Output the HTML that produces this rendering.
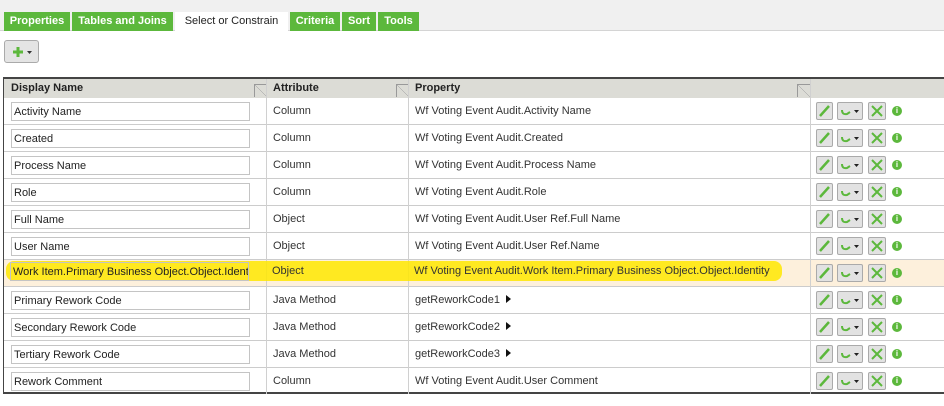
<!DOCTYPE html><html><head><style>
*{box-sizing:border-box;margin:0;padding:0}
body{width:944px;height:406px;background:#fff;font-family:"Liberation Sans",Arial,sans-serif;font-size:11px;color:#333;position:relative;overflow:hidden}
.top{position:absolute;left:0;top:0;width:944px;height:31px;background:#f0f0f0;border-bottom:1px solid #d4d4d4}
.tab{position:absolute;top:12px;height:19px;background:#5cb83c;color:#fff;font-weight:bold;font-size:11px;line-height:19px;text-align:center}
.tab.sel{background:#fff;color:#222;font-weight:normal;height:20px}
.addbtn{position:absolute;left:4px;top:40px;width:35px;height:23px;border:1px solid #aaa;border-radius:3px;background:#e4e4e4}
.tbl{position:absolute;left:3px;top:77px;width:941px;height:317px;border-top:2px solid #444;border-left:1px solid #444;border-bottom:2px solid #444}
.hdr{position:absolute;left:0;top:0;width:940px;height:19px;background:#dcdcd6;font-weight:bold;font-size:11px;color:#222}
.hdr span{position:absolute;top:3px}
.corner{position:absolute;top:5px;width:13px;height:13px;border-top:1px solid #999;border-left:1px solid #999;background:linear-gradient(45deg,transparent 48%,#999 50%,transparent 52%)}
.vl{position:absolute;top:0;width:1px;height:315px;background:#d0d0d0}
.row{position:absolute;left:0;width:940px;height:27px;border-bottom:1px solid #ccc}
.row.hl{background:#fdf0dc}
.inp{position:absolute;left:7px;top:4px;width:239px;height:19px;border:1px solid #c4c4c4;background:#fff;padding-left:2px;line-height:18px;color:#222;white-space:nowrap;overflow:hidden}
.a{position:absolute;left:269px;top:7px}
.p{position:absolute;left:411px;top:7px;white-space:nowrap}
.tri{display:inline-block;width:0;height:0;border-left:5px solid #111;border-top:4px solid transparent;border-bottom:4px solid transparent;margin-left:6px}
.b{position:absolute;top:5px;height:18px;border:1px solid #aaa;border-radius:2px;background:#e2e2e2}
.info{position:absolute;top:9px;width:10px;height:10px;border-radius:50%;background:#5cb83c;color:#fff;font-size:8px;font-weight:bold;text-align:center;line-height:10px}
.hi{position:absolute;left:6px;top:261px;width:776px;height:20px;background:#ffe800;opacity:.85;border-radius:8px}
</style></head><body>
<div class="top"></div>
<div class="tab" style="left:4px;width:66px">Properties</div>
<div class="tab" style="left:72px;width:101px">Tables and Joins</div>
<div class="tab sel" style="left:175px;width:113px">Select or Constrain</div>
<div class="tab" style="left:290px;width:50px">Criteria</div>
<div class="tab" style="left:342px;width:34px">Sort</div>
<div class="tab" style="left:378px;width:41px">Tools</div>
<div class="addbtn"><svg width="35" height="23"><path d="M8 11h10M13 6v10" stroke="#5cb83c" stroke-width="3"/><path d="M22 10h5l-2.5 3z" fill="#333"/></svg></div>
<div class="tbl">
<div class="hdr"><span style="left:7px">Display Name</span><span style="left:269px">Attribute</span><span style="left:411px">Property</span>
<div class="corner" style="left:250px"></div><div class="corner" style="left:392px"></div><div class="corner" style="left:793px"></div></div>
<div class="row" style="top:19px"><div class="inp">Activity Name</div><div class="a">Column</div><div class="p">Wf Voting Event Audit.Activity Name</div></div>
<div class="row" style="top:46px"><div class="inp">Created</div><div class="a">Column</div><div class="p">Wf Voting Event Audit.Created</div></div>
<div class="row" style="top:73px"><div class="inp">Process Name</div><div class="a">Column</div><div class="p">Wf Voting Event Audit.Process Name</div></div>
<div class="row" style="top:100px"><div class="inp">Role</div><div class="a">Column</div><div class="p">Wf Voting Event Audit.Role</div></div>
<div class="row" style="top:127px"><div class="inp">Full Name</div><div class="a">Object</div><div class="p">Wf Voting Event Audit.User Ref.Full Name</div></div>
<div class="row" style="top:154px"><div class="inp">User Name</div><div class="a">Object</div><div class="p">Wf Voting Event Audit.User Ref.Name</div></div>
<div class="row hl" style="top:181px"></div>
<div class="row" style="top:208px"><div class="inp">Primary Rework Code</div><div class="a">Java Method</div><div class="p">getReworkCode1<span class="tri"></span></div></div>
<div class="row" style="top:235px"><div class="inp">Secondary Rework Code</div><div class="a">Java Method</div><div class="p">getReworkCode2<span class="tri"></span></div></div>
<div class="row" style="top:262px"><div class="inp">Tertiary Rework Code</div><div class="a">Java Method</div><div class="p">getReworkCode3<span class="tri"></span></div></div>
<div class="row" style="top:289px;border-bottom:none"><div class="inp">Rework Comment</div><div class="a">Column</div><div class="p">Wf Voting Event Audit.User Comment</div></div>
<div class="vl" style="left:262px"></div><div class="vl" style="left:404px"></div><div class="vl" style="left:806px"></div>
</div>
<div class="hi"></div>
<div style="position:absolute;left:3px;top:258px;width:941px;height:27px">
<div class="inp" style="left:7px;background:transparent">Work Item.Primary Business Object.Object.Identity</div>
<div class="a">Object</div><div class="p">Wf Voting Event Audit.Work Item.Primary Business Object.Object.Identity</div></div>
<div id="icons"></div>
<script>
var h='';for(var i=0;i<11;i++){var t=97+27*i;
h+='<div style="position:absolute;left:0;top:'+t+'px;width:944px;height:27px">'+
'<div class="b" style="left:816px;width:17px"><svg width="15" height="16"><path d="M3 13L12 3" stroke="#5cb83c" stroke-width="2.5"/></svg></div>'+
'<div class="b" style="left:837px;width:26px"><svg width="24" height="16"><path d="M4 7q0 5 5 4l3-2" stroke="#5cb83c" stroke-width="2" fill="none"/><path d="M16 7h5l-2.5 3z" fill="#222"/></svg></div>'+
'<div class="b" style="left:868px;width:18px"><svg width="16" height="16"><path d="M3 3L13 13M13 3L3 13" stroke="#5cb83c" stroke-width="2"/></svg></div>'+
'<div class="info" style="left:892px">i</div></div>';}
document.getElementById('icons').innerHTML=h;
</script>
</body></html>
